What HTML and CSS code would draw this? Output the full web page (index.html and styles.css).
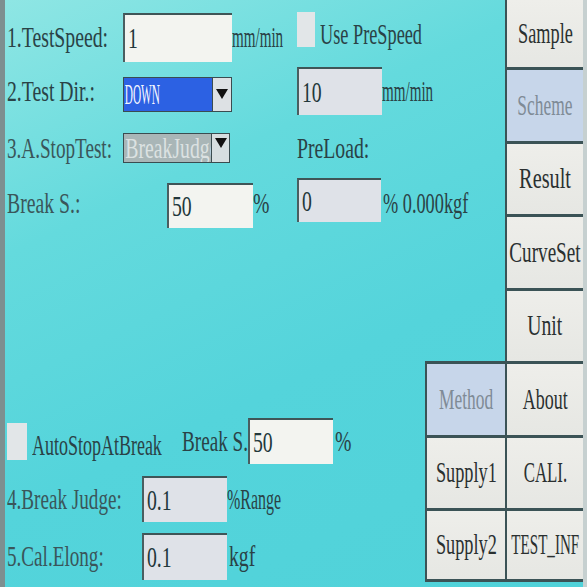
FILE: index.html
```html
<!DOCTYPE html>
<html>
<head>
<meta charset="utf-8">
<link rel="stylesheet" href="styles.css">
</head>
<body>
<div class="screen">
  <div class="panel">
    <div class="row r1">
      <div class="lbl w116"><span class="t">1.TestSpeed:</span></div>
      <div class="field white w109"><span class="t">1</span></div>
      <div class="unit w65"><span class="t s52">mm/min</span></div>
      <div class="check c-top"></div>
      <div class="lbl top"><span class="t s63">Use PreSpeed</span></div>
    </div>
    <div class="row r2">
      <div class="lbl w116"><span class="t">2.Test Dir.:</span></div>
      <div class="drop blue">
        <span class="t s39">DOWN</span>
        <div class="arrow"><i class="tri"></i></div>
      </div>
      <div class="gap65"></div>
      <div class="field grey w85"><span class="t">10</span></div>
      <div class="unit"><span class="t s52">mm/min</span></div>
    </div>
    <div class="row r3">
      <div class="lbl w116 faint"><span class="t s66">3.A.StopTest:</span></div>
      <div class="drop disabled">
        <span class="t">BreakJudge</span>
        <div class="arrow"><i class="tri"></i></div>
      </div>
      <div class="gap67"></div>
      <div class="lbl"><span class="t">PreLoad:</span></div>
    </div>
    <div class="row r4">
      <div class="lbl w160 faint"><span class="t">Break S.:</span></div>
      <div class="field white w86 h45 bottom"><span class="t">50</span></div>
      <div class="unit w44"><span class="t">%</span></div>
      <div class="field grey w84 h44 top"><span class="t">0</span></div>
      <div class="unit ml2"><span class="t s63">% 0.000kgf</span></div>
    </div>
    <div class="row r5">
      <div class="check c-auto"></div>
      <div class="lbl w150"><span class="t s62">AutoStopAtBreak</span></div>
      <div class="lbl w66"><span class="t s66">Break S.</span></div>
      <div class="field white w85 h46"><span class="t">50</span></div>
      <div class="unit ml2"><span class="t">%</span></div>
    </div>
    <div class="row r6">
      <div class="lbl w135 faint"><span class="t s66">4.Break Judge:</span></div>
      <div class="field grey w85 h46"><span class="t">0.1</span></div>
      <div class="unit"><span class="t s55">%Range</span></div>
    </div>
    <div class="row r7">
      <div class="lbl w135 faint"><span class="t s66">5.Cal.Elong:</span></div>
      <div class="field grey w85 h47"><span class="t">0.1</span></div>
      <div class="unit ml2"><span class="t">kgf</span></div>
    </div>
  </div>
  <div class="buttons">
    <div class="btn c2 first"><span class="t s63">Sample</span></div>
    <div class="btn c2 sel"><span class="t s60">Scheme</span></div>
    <div class="btn c2"><span class="t s70">Result</span></div>
    <div class="btn c2"><span class="t s66">CurveSet</span></div>
    <div class="btn c2"><span class="t">Unit</span></div>
    <div class="btn c1 sel"><span class="t s60">Method</span></div>
    <div class="btn c2"><span class="t s62">About</span></div>
    <div class="btn c1"><span class="t s63">Supply1</span></div>
    <div class="btn c2"><span class="t s58">CALI.</span></div>
    <div class="btn c1 last"><span class="t s63">Supply2</span></div>
    <div class="btn c2 last"><span class="t s52">TEST_INF</span></div>
  </div>
</div>
</body>
</html>
```

FILE: styles.css
```css
html, body {
  margin: 0;
  padding: 0;
  width: 587px;
  height: 587px;
  overflow: hidden;
}
body {
  font-family: "Liberation Serif", "DejaVu Serif", serif;
  font-size: 29px;
  color: #2a4246;
  background: #55d5db;
}
.screen {
  display: flex;
  width: 587px;
  height: 587px;
  background: linear-gradient(155deg, #8fe6e4 0%, #64dadd 30%, #54d4db 60%, #50d2d9 100%);
}
.panel {
  width: 418px;
  height: 587px;
  border-left: 5px solid #7d8f90;
  padding-left: 2px;
  display: flex;
  flex-direction: column;
}
.row {
  display: flex;
  align-items: center;
  flex: none;
}
.r1 { margin-top: 13px; height: 49px; }
.r2 { margin-top: 5px; height: 48px; }
.r3 { margin-top: 18px; height: 30px; }
.r4 { margin-top: 15px; height: 50px; }
.r5 { margin-top: 190px; height: 46px; }
.r6 { margin-top: 12px; height: 46px; }
.r7 { margin-top: 11px; height: 47px; }

.t {
  display: inline-block;
  white-space: nowrap;
  transform: scaleX(0.68);
  transform-origin: left center;
  line-height: 1;
}
.s39 { transform: scaleX(0.39); }
.s52 { transform: scaleX(0.52); }
.s55 { transform: scaleX(0.55); }
.s58 { transform: scaleX(0.58); }
.s60 { transform: scaleX(0.60); }
.s62 { transform: scaleX(0.62); }
.s63 { transform: scaleX(0.63); }
.s66 { transform: scaleX(0.66); }
.s70 { transform: scaleX(0.70); }

.lbl, .unit { flex: none; white-space: nowrap; }
.faint { color: #3a565a; }
.top { align-self: flex-start; }
.bottom { align-self: flex-end; }
.w116 { width: 116px; }
.w160 { width: 160px; }
.w150 { width: 150px; }
.w66 { width: 66px; }
.w135 { width: 135px; }
.w65 { width: 65px; }
.w44 { width: 44px; }
.ml2 { margin-left: 2px; }
.gap65 { width: 65px; flex: none; }
.gap67 { width: 67px; flex: none; }

.field {
  flex: none;
  box-sizing: border-box;
  height: 49px;
  display: flex;
  align-items: center;
  padding-left: 3px;
  overflow: hidden;
  color: #22373a;
  border-top: 2px solid #3f5557;
  border-left: 2px solid #4a5e60;
}
.white { background: #f3f4f0; }
.grey { background: #dfe2e8; }
.w109 { width: 109px; }
.w85 { width: 85px; }
.w86 { width: 86px; }
.w84 { width: 84px; }
.r2 .field { height: 48px; }
.h44 { height: 44px; }
.h45 { height: 45px; }
.h46 { height: 46px; }
.h47 { height: 47px; }

.check {
  flex: none;
  background: #e2e6e8;
}
.c-top {
  width: 18px;
  height: 35px;
  margin-top: -1px;
  margin-right: 5px;
  align-self: flex-start;
}
.r1 .lbl.top { line-height: 35px; margin-top: 4px; }
.c-auto {
  width: 20px;
  height: 37px;
  margin-right: 5px;
  align-self: flex-start;
  margin-top: 5px;
}
.r5 .w150 { margin-top: 8px; }

.drop {
  flex: none;
  box-sizing: border-box;
  display: flex;
  align-items: center;
  overflow: hidden;
  border: 1px solid #3a4c50;
  position: relative;
}
.drop .t { padding-left: 2px; }
.blue {
  width: 109px;
  height: 35px;
  background: #2c61e3;
  color: #f4f6ff;
  margin-top: 6px;
}
.disabled {
  width: 107px;
  height: 30px;
  background: #a9b6b7;
  color: #dce2e2;
}
.arrow {
  position: absolute;
  right: 0;
  top: 0;
  bottom: 0;
  width: 18px;
  background: #dde1e4;
  border-left: 1px solid #3a4c50;
  display: flex;
  align-items: center;
  justify-content: center;
}
.disabled .arrow { background: #d6dee0; align-items: flex-start; padding-top: 4px; box-sizing: border-box; }
.tri {
  width: 0;
  height: 0;
  border-left: 6px solid transparent;
  border-right: 6px solid transparent;
  border-top: 10px solid #111;
}

.buttons {
  flex: none;
  width: 158px;
  height: 587px;
  border-right: 4px solid #c6d0d0;
  display: grid;
  grid-template-columns: 80px 78px;
  grid-template-rows: 67px repeat(7, 73.5px);
}
.btn {
  box-sizing: border-box;
  background: linear-gradient(180deg, #eeeeea, #e6e7e3);
  border-top: 3px solid #3b5356;
  border-left: 2px solid #3b5356;
  display: flex;
  align-items: center;
  justify-content: center;
  color: #2a3030;
  overflow: visible;
}
.btn .t { transform-origin: center center; }
.c1 { grid-column: 1; }
.c2 { grid-column: 2; }
.first { border-top: 0; }
.sel {
  background: #c7d6ea;
  color: #7f8b96;
}
.last { border-bottom: 3px solid #3b5356; }
.c1.sel { grid-row: 6; }
```
